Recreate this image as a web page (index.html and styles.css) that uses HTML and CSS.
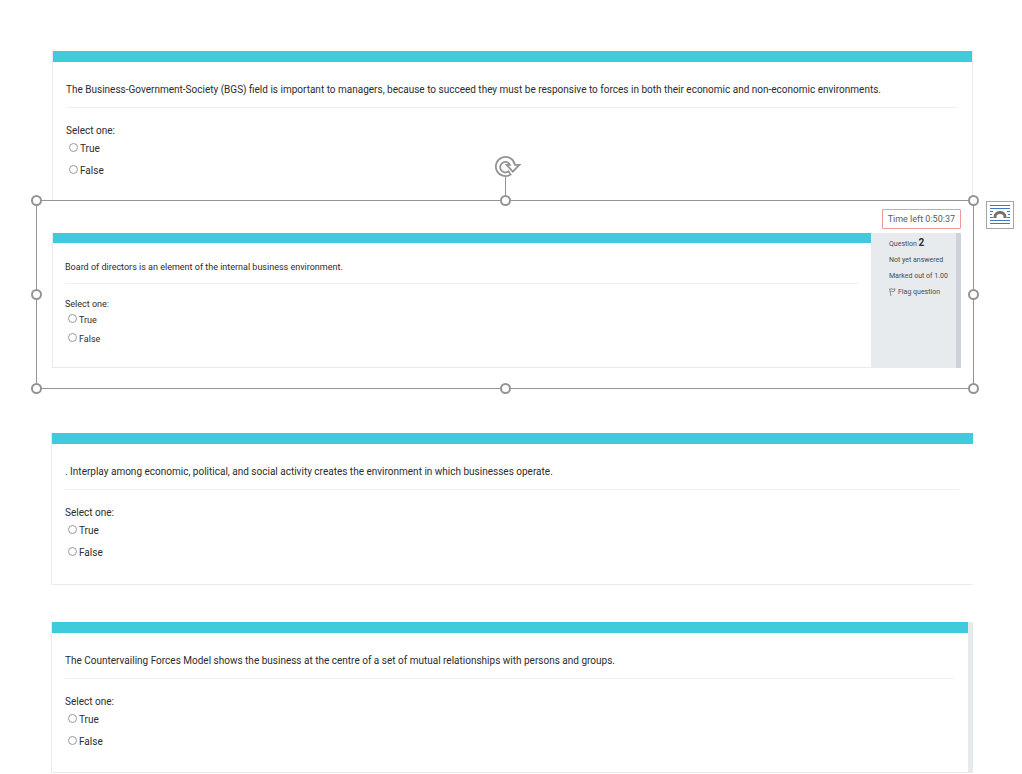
FILE: index.html
```html
<!DOCTYPE html>
<html lang="en">
<head>
<meta charset="utf-8">
<title>Quiz questions</title>
<meta name="viewport" content="width=device-width, initial-scale=1">
<link rel="stylesheet" href="styles.css">
</head>
<body>
<main class="page">
  <section class="card card-first">
    <div class="card-main">
      <p class="prompt">The Business-Government-Society (BGS) field is important to managers, because to succeed they must be responsive to forces in both their economic and non-economic environments.</p>
      <fieldset class="answers">
        <legend>Select one:</legend>
        <label class="option"><input type="radio" name="q1"><span>True</span></label>
        <label class="option"><input type="radio" name="q1"><span>False</span></label>
      </fieldset>
    </div>
  </section>

  <div class="selection">
    <div class="timer">Time left 0:50:37</div>
    <section class="card card-small">
      <div class="card-main">
        <p class="prompt">Board of directors is an element of the internal business environment.</p>
        <fieldset class="answers">
          <legend>Select one:</legend>
          <label class="option"><input type="radio" name="q2"><span>True</span></label>
          <label class="option"><input type="radio" name="q2"><span>False</span></label>
        </fieldset>
      </div>
      <aside class="info">
        <h2 class="info-title">Question <b>2</b></h2>
        <p>Not yet answered</p>
        <p>Marked out of 1.00</p>
        <button type="button" class="flag">
          <svg width="7" height="8" viewBox="0 0 7 8" aria-hidden="true"><path d="M.5 0.8 2 8M.8 1.2C2.5 0 3.5 2 6 .8L5.4 3.2C4 4.2 3 2.8 1.5 3.6" fill="none" stroke="currentColor" stroke-width=".6"/></svg>
          <span>Flag question</span>
        </button>
      </aside>
    </section>
    <svg class="rotate" width="30" height="46" viewBox="0 0 30 46" role="img" aria-label="Rotate">
      <path d="M13.5 21V46" stroke="#949494" fill="none"/>
      <path d="M22.9 9.8A9.6 9.6 0 1 0 18.6 19.6L16.5 16.3A5.2 5.2 0 1 1 18 9.8H14.6L20.8 16.6 27.4 9.8Z" fill="#fff" stroke="#949494" stroke-width="1.8"/>
    </svg>
    <span class="handle top left"></span>
    <span class="handle top center"></span>
    <span class="handle top right"></span>
    <span class="handle middle left"></span>
    <span class="handle middle right"></span>
    <span class="handle bottom left"></span>
    <span class="handle bottom center"></span>
    <span class="handle bottom right"></span>
    <button type="button" class="layout-button" aria-label="Layout options">
      <svg width="20" height="20" viewBox="0 0 20 20" aria-hidden="true">
        <path d="M0 .5H20M0 3.5H20M0 6.5H3M17 6.5H20M0 9.5H2M18 9.5H20M0 12.5H3M17 12.5H20M0 15.5H20M0 18.5H20" stroke="#3e79b8" stroke-width="1"/>
        <path d="M5 13V12C5 6 15 6 15 12V13" fill="none" stroke="#737373" stroke-width="3"/>
      </svg>
    </button>
  </div>

  <section class="card card-third">
    <div class="card-main">
      <p class="prompt">. Interplay among economic, political, and social activity creates the environment in which businesses operate.</p>
      <fieldset class="answers">
        <legend>Select one:</legend>
        <label class="option"><input type="radio" name="q3"><span>True</span></label>
        <label class="option"><input type="radio" name="q3"><span>False</span></label>
      </fieldset>
    </div>
  </section>

  <section class="card card-fourth">
    <div class="card-main">
      <p class="prompt">The Countervailing Forces Model shows the business at the centre of a set of mutual relationships with persons and groups.</p>
      <fieldset class="answers">
        <legend>Select one:</legend>
        <label class="option"><input type="radio" name="q4"><span>True</span></label>
        <label class="option"><input type="radio" name="q4"><span>False</span></label>
      </fieldset>
    </div>
  </section>
</main>
</body>
</html>
```
FILE: styles.css
```css
* {
  box-sizing: border-box;
}

body {
  margin: 0;
  background: #fff;
  color: #2c2c2c;
  font: 10px/16px "Segoe UI", Roboto, sans-serif;
}

p {
  margin: 0;
}

button {
  font: inherit;
  color: inherit;
  background: none;
  border: 0;
  padding: 0;
}

.page {
  padding-top: 51px;
}

.card {
  display: flex;
  margin: 0 49px 0 51px;
}

.card-main {
  flex: 1;
  min-width: 0;
  padding: 31px 14px 23px 13px;
  border: solid #e8eaed;
  border-width: 0 0 1px 1px;
  background: linear-gradient(#3fcbdb, #3fcbdb) 0 0 / 100% 11px no-repeat;
}

.prompt {
  padding-bottom: 9px;
  border-bottom: 1px solid #f0f0f1;
}

.answers {
  margin: 15px 0 0;
  padding: 0;
  border: 0;
  display: flex;
  flex-direction: column;
  gap: 6px;
}

.answers legend {
  padding: 0 0 2px;
}

.option {
  display: flex;
  align-items: center;
  gap: 2px;
  padding-left: 3px;
}

.option input {
  appearance: none;
  width: 9px;
  height: 9px;
  margin: 0 0 3px;
  border: 1px solid #999;
  border-radius: 50%;
  background: #fff;
}

.option input:checked {
  background: #777;
}

.card-first {
  margin-left: 52px;
}

.card-first .card-main {
  padding-bottom: 21px;
  border-width: 0 1px;
}

.selection {
  position: relative;
  margin: 0 48px 0 36px;
  padding: 8px 12px 20px 15px;
  border: 1px solid #949494;
}

.timer {
  width: max-content;
  margin: 0 0 4px auto;
  padding: 1px 5px;
  border: 1px solid #ee9a9b;
  border-radius: 1px;
  color: #5c5c5c;
  font-size: 9px;
}

.card-small {
  margin: 0;
  font-size: 9px;
}

.card-small .card-main {
  padding: 26px 12px 20px;
  background-size: 100% 10px;
}

.card-small .prompt {
  padding-bottom: 8px;
}

.card-small .answers {
  margin-top: 12px;
  gap: 3px;
}

.card-small legend {
  padding: 0;
}

.info {
  width: 90px;
  padding: 2px 0 0 18px;
  background: #e7ebee;
  border-right: 5px solid #ced2da;
  color: #484b4e;
  font-size: 7px;
}

.info-title {
  margin: 0;
  font-size: 7px;
  font-weight: 400;
}

.info-title b {
  color: #2d2f31;
  font-size: 10px;
}

.flag {
  display: flex;
  align-items: center;
  gap: 2px;
}

.handle {
  position: absolute;
  width: 11px;
  height: 11px;
  border: 2px solid #949494;
  border-radius: 50%;
  background: #fff;
}

.top { top: -6px; }
.middle { top: calc(50% - 6px); }
.bottom { bottom: -6px; }
.left { left: -6px; }
.center { left: calc(50% - 5px); }
.right { right: -6px; }

.rotate {
  position: absolute;
  top: -46px;
  left: calc(50% - 13px);
}

.layout-button {
  position: absolute;
  top: 0;
  left: calc(100% + 13px);
  width: 28px;
  height: 28px;
  border: 1px solid #a6a6a6;
  display: grid;
  place-items: center;
}

.card-third {
  margin-top: 44px;
}

.card-fourth {
  margin-top: 37px;
}

.card-fourth .card-main {
  padding-bottom: 22px;
}

.card-fourth::after {
  content: "";
  width: 5px;
  background: #e6eaed;
}
```
